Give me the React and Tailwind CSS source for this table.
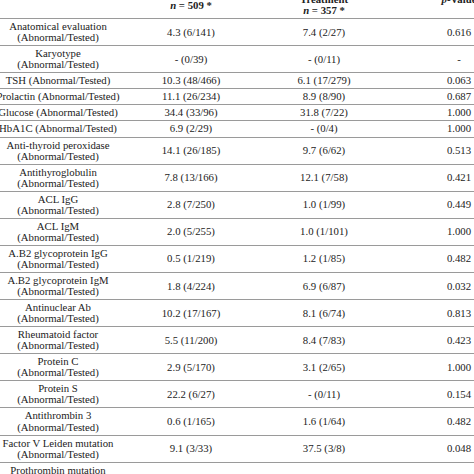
import React from "react";

// rows: [name, second line?, col2, col3, p]
const rows = [
  ["Anatomical evaluation", "(Abnormal/Tested)", "4.3 (6/141)", "7.4 (2/27)", "0.616"],
  ["Karyotype", "(Abnormal/Tested)", "- (0/39)", "- (0/11)", "-"],
  ["TSH (Abnormal/Tested)", null, "10.3 (48/466)", "6.1 (17/279)", "0.063"],
  ["Prolactin (Abnormal/Tested)", null, "11.1 (26/234)", "8.9 (8/90)", "0.687"],
  ["Glucose (Abnormal/Tested)", null, "34.4 (33/96)", "31.8 (7/22)", "1.000"],
  ["HbA1C (Abnormal/Tested)", null, "6.9 (2/29)", "- (0/4)", "1.000"],
  ["Anti-thyroid peroxidase", "(Abnormal/Tested)", "14.1 (26/185)", "9.7 (6/62)", "0.513"],
  ["Antithyroglobulin", "(Abnormal/Tested)", "7.8 (13/166)", "12.1 (7/58)", "0.421"],
  ["ACL IgG", "(Abnormal/Tested)", "2.8 (7/250)", "1.0 (1/99)", "0.449"],
  ["ACL IgM", "(Abnormal/Tested)", "2.0 (5/255)", "1.0 (1/101)", "1.000"],
  ["A.B2 glycoprotein IgG", "(Abnormal/Tested)", "0.5 (1/219)", "1.2 (1/85)", "0.482"],
  ["A.B2 glycoprotein IgM", "(Abnormal/Tested)", "1.8 (4/224)", "6.9 (6/87)", "0.032"],
  ["Antinuclear Ab", "(Abnormal/Tested)", "10.2 (17/167)", "8.1 (6/74)", "0.813"],
  ["Rheumatoid factor", "(Abnormal/Tested)", "5.5 (11/200)", "8.4 (7/83)", "0.423"],
  ["Protein C", "(Abnormal/Tested)", "2.9 (5/170)", "3.1 (2/65)", "1.000"],
  ["Protein S", "(Abnormal/Tested)", "22.2 (6/27)", "- (0/11)", "0.154"],
  ["Antithrombin 3", "(Abnormal/Tested)", "0.6 (1/165)", "1.6 (1/64)", "0.482"],
  ["Factor V Leiden mutation", "(Abnormal/Tested)", "9.1 (3/33)", "37.5 (3/8)", "0.048"],
  ["Prothrombin mutation", "(Abnormal/Tested)", "", "", ""],
];

const cell = "px-1 py-[2px] text-center align-middle border-b border-[#9a9a9a]";

export default function App() {
  return (
    <div className="w-[474px] h-[474px] overflow-hidden bg-white">
      <table
        className="table-fixed border-collapse w-[536px] -ml-[9px] -mt-[19px] text-[10.75px] leading-[11.05px] text-[#222]"
        style={{ fontFamily: '"Liberation Serif", "Times New Roman", serif' }}
      >
        <colgroup>
          <col className="w-[134px]" />
          <col className="w-[132px]" />
          <col className="w-[134px]" />
          <col className="w-[136px]" />
        </colgroup>
        <thead>
          <tr className="font-bold">
            <th className={cell}></th>
            <th className={cell}>
              No Treatment
              <br />
              <i>n</i> = 509 *
            </th>
            <th className={cell}>
              Received
              <br />
              Treatment
              <br />
              <i>n</i> = 357 *
            </th>
            <th className={cell}>
              <i>p</i>-Value
            </th>
          </tr>
        </thead>
        <tbody>
          {rows.map((r) => (
            <tr key={r[0]}>
              <td className={cell}>
                {r[0]}
                {r[1] && (
                  <>
                    <br />
                    {r[1]}
                  </>
                )}
              </td>
              <td className={cell}>{r[2]}</td>
              <td className={cell}>{r[3]}</td>
              <td className={cell}>{r[4]}</td>
            </tr>
          ))}
        </tbody>
      </table>
    </div>
  );
}
